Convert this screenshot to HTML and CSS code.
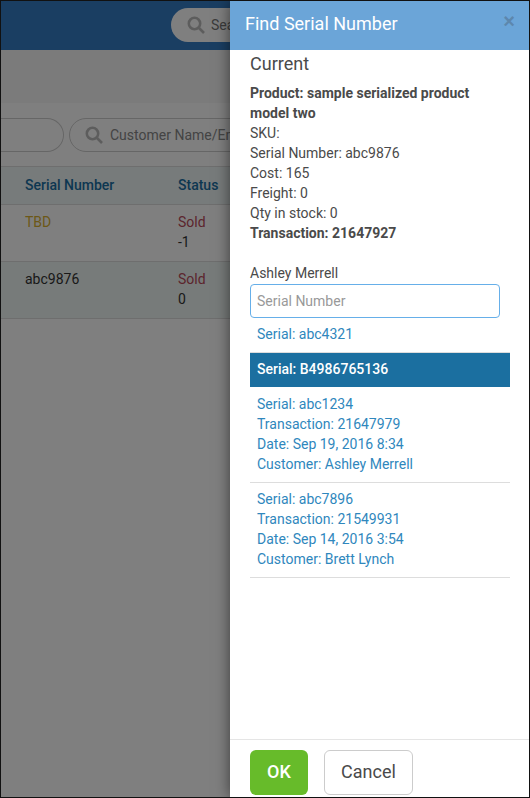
FILE: index.html
```html
<!DOCTYPE html>
<html lang="en">
<head>
<meta charset="utf-8">
<title>Find Serial Number</title>
<link rel="stylesheet" href="styles.css">
</head>
<body>
<div class="frame">
  <div class="page">
    <header class="topbar">
      <div class="top-search">
        <svg class="search-icon" viewBox="0 0 20 20"><circle cx="8.5" cy="8.5" r="5.7"/><path d="M13 13l5 5"/></svg>
        <span>Search</span>
      </div>
    </header>
    <div class="band"></div>
    <div class="toolbar">
      <div class="pill pill-cut"></div>
      <div class="pill pill-search">
        <svg class="search-icon" viewBox="0 0 20 20"><circle cx="8.5" cy="8.5" r="5.7"/><path d="M13 13l5 5"/></svg>
        <span>Customer Name/Email</span>
      </div>
    </div>
    <div class="row head"><div>Serial Number</div><div>Status</div></div>
    <div class="row"><div class="tbd">TBD</div><div><div class="sold">Sold</div><div>-1</div></div></div>
    <div class="row alt"><div>abc9876</div><div><div class="sold">Sold</div><div>0</div></div></div>
    <div class="rest"></div>
    <div class="backdrop"></div>
  </div>
  <aside class="panel">
    <div class="panel-head">
      <h1>Find Serial Number</h1>
      <span class="close">×</span>
    </div>
    <div class="panel-body">
      <h2>Current</h2>
      <div class="info">
        <div class="b">Product: sample serialized product model two</div>
        <div>SKU:</div>
        <div>Serial Number: abc9876</div>
        <div>Cost: 165</div>
        <div>Freight: 0</div>
        <div>Qty in stock: 0</div>
        <div class="b">Transaction: 21647927</div>
      </div>
      <div class="name">Ashley Merrell</div>
      <input class="serial" type="text" placeholder="Serial Number">
      <ul class="list">
        <li>Serial: abc4321</li>
        <li class="active">Serial: B4986765136</li>
        <li>Serial: abc1234<br>Transaction: 21647979<br>Date: Sep 19, 2016 8:34<br>Customer: Ashley Merrell</li>
        <li>Serial: abc7896<br>Transaction: 21549931<br>Date: Sep 14, 2016 3:54<br>Customer: Brett Lynch</li>
      </ul>
    </div>
    <div class="panel-foot">
      <button class="btn ok">OK</button>
      <button class="btn cancel">Cancel</button>
    </div>
  </aside>
</div>
</body>
</html>
```
FILE: styles.css
```css
* { box-sizing: border-box; }
html, body { margin: 0; height: 100%; }
body { font-family: Roboto, "Liberation Sans", sans-serif; font-size: 14px; line-height: 20px; color: #4a4a4a; background: #fff; }
.frame { position: relative; height: 798px; border: 1px solid #111; overflow: hidden; }
.page { position: relative; height: 100%; display: flex; flex-direction: column; background: #fff; }
.backdrop { position: absolute; inset: 0; background: rgba(0,0,0,.5); }
.topbar { height: 49px; flex: none; background: #347cc4; display: flex; align-items: center; padding: 0 0 0 170px; }
.top-search { width: 120px; height: 34px; background: #fff; border-radius: 17px; display: flex; align-items: center; gap: 5px; padding-left: 15px; color: #777; margin-top: -1px; }
.band { height: 53px; flex: none; background: #f6f6f6; }
.toolbar { height: 64px; flex: none; background: #fff; display: flex; align-items: center; gap: 5px; border-bottom: 1px solid #ddd; }
.pill { height: 34px; border: 1px solid #ccc; border-radius: 17px; }
.pill-cut { width: 63px; border-left: 0; border-radius: 0 17px 17px 0; }
.pill-search { width: 240px; display: flex; align-items: center; gap: 6px; padding-left: 14px; color: #888; white-space: nowrap; overflow: hidden; }
.search-icon { width: 20px; height: 20px; flex: none; fill: none; stroke: #bbb; stroke-width: 2.6; }
.row { display: grid; grid-template-columns: 153px 1fr; padding-left: 24px; height: 57px; padding-top: 7px; border-bottom: 1px solid #ddd; color: #333; }
.row.head { height: 38px; background: #eef6f6; font-weight: 500; color: #1a6fa3; padding-top: 8px; }
.row.alt { background: #eef6f4; }
.tbd { color: #d9b02f; }
.sold { color: #b94a5a; }
.rest { flex: 1; background: #fff; }
.panel { position: absolute; top: 0; right: 0; bottom: 0; width: 299px; background: #fff; display: flex; flex-direction: column; box-shadow: 0 0 14px rgba(0,0,0,.55); }
.panel-head { height: 49px; flex: none; background: #6ba5d8; display: flex; justify-content: space-between; padding: 0 14px 0 15px; }
.panel-head h1 { margin: 0; font-size: 18px; font-weight: 400; line-height: 45px; color: #fff; }
.close { font-size: 20px; line-height: 41px; font-weight: 700; color: #5d87ad; font-family: "Liberation Sans", sans-serif; }
.panel-body { flex: 1; padding: 0 19px 0 20px; }
.panel-body h2 { margin: 0; font-size: 18px; font-weight: 400; line-height: 28px; padding-bottom: 5px; }
.b { font-weight: 700; }
.info { margin-bottom: 20px; }
.name { line-height: 20px; }
.serial { display: block; width: 250px; height: 34px; margin-top: 1px; padding: 0 6px; border: 1px solid #66afe9; border-radius: 4px; font: inherit; color: #444; outline: 0; }
.serial::placeholder { color: #999; }
.list { list-style: none; margin: 0; padding: 0; }
.list li { padding: 7px 7px; color: #2f87bd; border-bottom: 1px solid #ddd; }
.list li:nth-child(1) { padding-top: 6px; padding-bottom: 8px; }
.list li.active { background: #1b6fa0; color: #fff; font-weight: 500; border-bottom: 0; padding: 6px 7px 8px; height: 34px; }
.list li:nth-child(3) { padding-top: 7px; padding-bottom: 8px; }
.list li:nth-child(4) { padding-top: 6px; padding-bottom: 8px; }
.panel-foot { height: 58px; flex: none; border-top: 1px solid #e5e5e5; padding: 10px 20px 0; display: flex; gap: 16px; }
.btn { height: 45px; padding: 0 0 2px; border-radius: 6px; font: 400 18px Roboto, sans-serif; }
.ok { width: 58px; background: #67bb2a; border: 0; color: #fff; font-weight: 500; }
.cancel { width: 89px; background: #fff; border: 1px solid #ccc; color: #4a4a4a; }
```
